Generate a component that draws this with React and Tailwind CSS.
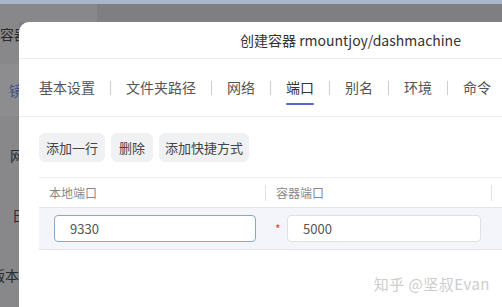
export default function App() {
  const font = { fontFamily: '"Noto Sans CJK SC", "Noto Sans", sans-serif' };
  const tabs = ["基本设置", "文件夹路径", "网络", "端口", "别名", "环境", "命令"];
  return (
    <div className="w-[502px] h-[307px] overflow-hidden bg-[#7f7f81] flex flex-col" style={font}>
      <div className="h-[4px] bg-[#aab5cc] shrink-0" />
      <div className="flex-1 flex flex-col relative">
        <div className="h-[18px] flex shrink-0">
          <div className="w-[97px] bg-[#88888a]" />
          <div className="flex-1" />
        </div>
        <div className="flex flex-1">
          <div className="w-[19px] bg-[#88888a] overflow-hidden flex flex-col text-[14px] text-[#2b2b2b] shrink-0">
            <div className="h-[27px] flex items-center whitespace-nowrap pl-[0px] -mt-[1px]">容器</div>
            <div className="h-[52px] mt-[16px] bg-[#8d8d90] flex items-center whitespace-nowrap text-[#3d4f8a] pl-[9px]">镜</div>
            <div className="h-[20px] mt-[29px] flex items-center whitespace-nowrap pl-[10px]">网</div>
            <div className="h-[20px] mt-[40px] flex items-center whitespace-nowrap pl-[12px]">日</div>
            <div className="h-[20px] mt-[40px] flex items-center whitespace-nowrap -ml-[9px]">版本</div>
          </div>
          <div className="flex-1 bg-white rounded-tl-[10px] flex flex-col">
            <div className="h-[37px] border-b border-[#ececec] flex items-center text-[14px] text-[#333] pl-[221px] whitespace-nowrap">
              创建容器 rmountjoy/dashmachine
            </div>
            <div className="h-[58px] border-b border-[#ececec] flex items-center pl-[20px] text-[14px] text-[#555]">
              {tabs.map((t, i) => (
                <div key={t} className="flex items-center">
                  {i > 0 && <div className="w-px h-[14px] bg-[#cfcfcf] mx-[15px]" />}
                  <div className="relative">
                    <span className={i === 3 ? "text-[#333]" : ""}>{t}</span>
                    {i === 3 && <div className="absolute left-0 right-0 -bottom-[7px] h-[2px] bg-[#5468c8] rounded" />}
                  </div>
                </div>
              ))}
            </div>
            <div className="flex gap-[6px] pl-[20px] pt-[16px] text-[13px] text-[#444]">
              <div className="h-[29px] px-[7px] rounded-[6px] bg-[#f0f1f3] flex items-center">添加一行</div>
              <div className="h-[29px] px-[8px] rounded-[6px] bg-[#f0f1f3] flex items-center">删除</div>
              <div className="h-[29px] px-[6px] rounded-[6px] bg-[#f0f1f3] flex items-center">添加快捷方式</div>
            </div>
            <div className="ml-[20px] mt-[15px] border-t border-[#ececec]">
              <div className="h-[29px] flex items-center text-[12px] text-[#888]">
                <div className="w-[226px] pl-[10px] flex items-center">本地端口</div>
                <div className="w-px h-[16px] bg-[#e2e2e2]" />
                <div className="w-[225px] pl-[10px]">容器端口</div>
                <div className="w-px h-[16px] bg-[#e2e2e2]" />
              </div>
              <div className="h-[43px] bg-[#f3f5fa] border-t border-b border-[#e3e5ea] flex items-center text-[13px] text-[#555]">
                <div className="w-[226px] pl-[15px] pr-[8px]">
                  <div className="h-[27px] w-[202px] rounded-[4px] border border-[#86a9c9] bg-white flex items-center pl-[15px]">9330</div>
                </div>
                <div className="flex items-center pl-[10px]">
                  <span className="text-[#e0464a] text-[12px] w-[12px]">*</span>
                  <div className="h-[27px] w-[194px] rounded-[4px] border border-[#e0e0e0] bg-white flex items-center pl-[15px]">5000</div>
                </div>
              </div>
            </div>
            <div className="flex-1 flex items-end justify-end pr-[12px] pb-[12px]">
              <div className="text-[15px] text-[#cdcdcd] tracking-[0.5px]">知乎 @坚叔Evan</div>
            </div>
          </div>
        </div>
      </div>
    </div>
  );
}
